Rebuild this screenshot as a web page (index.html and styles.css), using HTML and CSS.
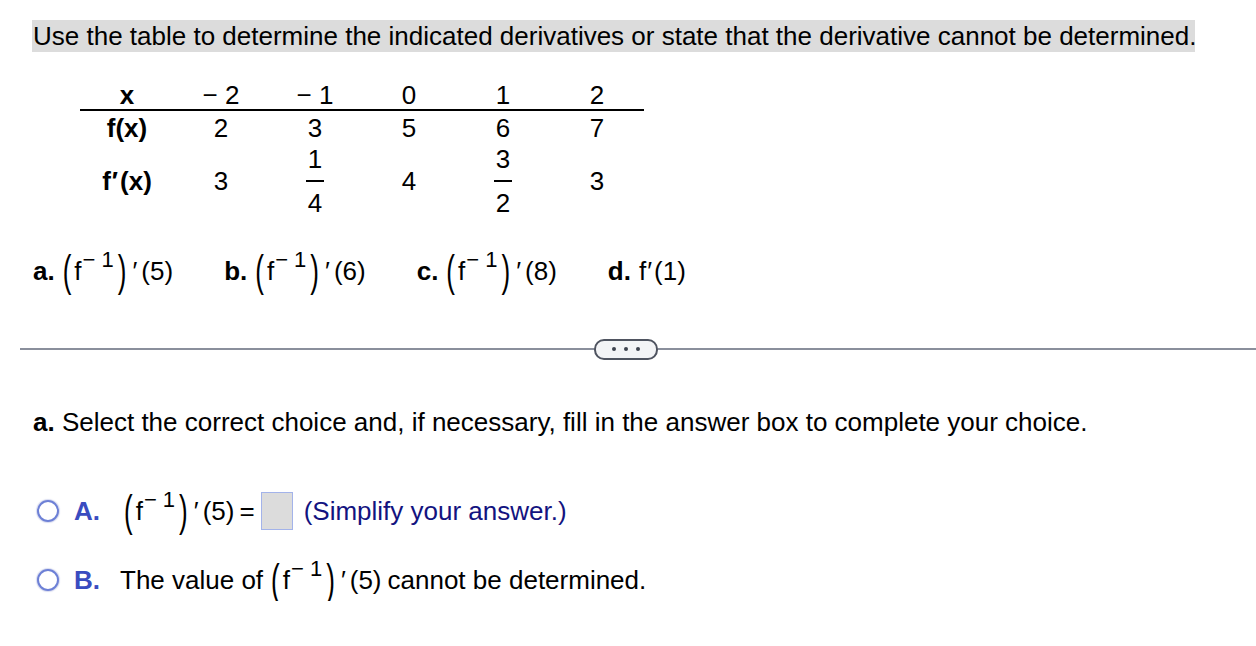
FILE: index.html
```html
<!DOCTYPE html>
<html>
<head>
<meta charset="utf-8">
<link rel="stylesheet" href="styles.css">
</head>
<body>
<div class="header">Use the table to determine the indicated derivatives or state that the derivative cannot be determined.</div>

<div class="table">
  <div class="cell lab head">x</div>
  <div class="cell head">− 2</div>
  <div class="cell head">− 1</div>
  <div class="cell head">0</div>
  <div class="cell head">1</div>
  <div class="cell head">2</div>
  <div class="rule"></div>
  <div class="cell lab r1">f(x)</div>
  <div class="cell r1">2</div>
  <div class="cell r1">3</div>
  <div class="cell r1">5</div>
  <div class="cell r1">6</div>
  <div class="cell r1">7</div>
  <div class="cell lab r2">f<span class="tp">′</span>(x)</div>
  <div class="cell r2">3</div>
  <div class="cell r2"><span class="frac"><span class="num">1</span><span class="bar"></span><span class="den">4</span></span></div>
  <div class="cell r2">4</div>
  <div class="cell r2"><span class="frac"><span class="num">3</span><span class="bar"></span><span class="den">2</span></span></div>
  <div class="cell r2">3</div>
</div>

<div class="parts">
  <div class="part pa"><b>a.</b> <span class="expr"><span class="paren">(</span><span class="fn">f</span><span class="sup">− 1</span><span class="paren">)</span><span class="pr"><span class="pm">′</span>(5)</span></span></div>
  <div class="part pb"><b>b.</b> <span class="expr"><span class="paren">(</span><span class="fn">f</span><span class="sup">− 1</span><span class="paren">)</span><span class="pr"><span class="pm">′</span>(6)</span></span></div>
  <div class="part pc"><b>c.</b> <span class="expr"><span class="paren">(</span><span class="fn">f</span><span class="sup">− 1</span><span class="paren">)</span><span class="pr"><span class="pm">′</span>(8)</span></span></div>
  <div class="part pd"><b>d.</b> f<span class="pm tight">′</span>(1)</div>
</div>

<div class="divider">
  <div class="line"></div>
  <div class="more"><span class="dot"></span><span class="dot"></span><span class="dot"></span></div>
  <div class="line grow"></div>
</div>

<div class="prompt"><b>a.</b> Select the correct choice and, if necessary, fill in the answer box to complete your choice.</div>

<div class="choices">
  <div class="choice">
    <span class="radio"></span>
    <span class="letter">A.</span>
    <span class="body">
      <span class="expr"><span class="paren">(</span><span class="fn">f</span><span class="sup">− 1</span><span class="paren">)</span><span class="pr"><span class="pm">′</span>(5)</span></span><span class="eq">=</span><span class="box"></span><span class="hint">(Simplify your answer.)</span>
    </span>
  </div>
  <div class="choice second">
    <span class="radio"></span>
    <span class="letter">B.</span>
    <span class="body">The value of <span class="expr"><span class="paren">(</span><span class="fn">f</span><span class="sup">− 1</span><span class="paren">)</span><span class="pr"><span class="pm">′</span>(5)</span></span> cannot be determined.</span>
  </div>
</div>
</body>
</html>
```

FILE: styles.css
```css
html, body {
  margin: 0;
  padding: 0;
  background: #ffffff;
}

body {
  font-family: "Liberation Sans", Arial, Helvetica, sans-serif;
  color: #000;
  width: 1256px;
}

.header {
  margin: 20px 0 0 32px;
  width: 1163px;
  height: 32px;
  box-sizing: border-box;
  padding-left: 1px;
  background: #dcdcdc;
  font-size: 26px;
  line-height: 33px;
  white-space: nowrap;
}

.table {
  margin: 29px 0 0 80px;
  width: 564px;
  display: grid;
  grid-template-columns: repeat(6, 94px);
  grid-template-rows: 28px 2px 34px 72px;
  font-size: 26px;
}

.cell {
  display: flex;
  align-items: center;
  justify-content: center;
  line-height: 1;
}

.lab {
  font-weight: bold;
}

.tp {
  margin: 0 2px 0 1px;
}

.rule {
  grid-column: 1 / 7;
  background: #000;
}

.frac {
  display: inline-flex;
  flex-direction: column;
  align-items: center;
  line-height: 22px;
}

.frac .bar {
  width: 18px;
  height: 2px;
  background: #000;
  margin: 10px 0 10px;
}

.parts {
  margin: 27px 0 0 33px;
  display: flex;
  gap: 51px;
  font-size: 26px;
  height: 54px;
  align-items: center;
}

.part {
  white-space: nowrap;
  display: flex;
  align-items: center;
}

.part b {
  margin-right: 8px;
}

.expr {
  display: inline-flex;
  align-items: center;
  white-space: nowrap;
}

.paren {
  display: inline-block;
  font-size: 26px;
  transform: scaleY(1.7);
  font-weight: normal;
  line-height: 1;
}

.fn {
  margin-left: 3px;
}

.sup {
  font-size: 22px;
  position: relative;
  top: -11px;
  margin-left: 1px;
  margin-right: 4px;
}

.pr {
  margin-left: 6px;
}

.pm {
  display: inline-block;
  margin-right: 4px;
}

.pm.tight {
  margin: 0 2px 0 1px;
}

.divider {
  margin: 40px 0 0 20px;
  display: flex;
  align-items: center;
  height: 22px;
}

.line {
  width: 574px;
  height: 2px;
  background: #8a8f9c;
}

.line.grow {
  flex: 1;
  width: auto;
}

.more {
  width: 64px;
  height: 21px;
  box-sizing: border-box;
  border: 2px solid #4f5460;
  border-radius: 10px;
  background: #f3f4f6;
  display: flex;
  align-items: center;
  justify-content: center;
  gap: 8px;
}

.dot {
  width: 4px;
  height: 4px;
  border-radius: 50%;
  background: #3e434f;
}

.prompt {
  margin: 47px 0 0 33px;
  font-size: 26px;
  line-height: 30px;
  white-space: nowrap;
}

.choices {
  margin: 53px 0 0 37px;
  display: flex;
  flex-direction: column;
  gap: 27px;
  font-size: 26px;
}

.choice {
  display: flex;
  align-items: center;
  height: 42px;
  white-space: nowrap;
}

.radio {
  width: 18px;
  height: 18px;
  border: 2px solid #6d80d6;
  border-radius: 50%;
  box-shadow: 0 0 1px 1px rgba(140, 150, 210, 0.35);
  background: #fff;
  margin-right: 15px;
}

.letter {
  color: #3a4cc0;
  font-weight: bold;
  width: 46px;
}

.body {
  display: flex;
  align-items: center;
}

.body .expr {
  margin-left: 4px;
}

.eq {
  margin-left: 5px;
}

.box {
  display: inline-block;
  width: 32px;
  height: 38px;
  box-sizing: border-box;
  background: #dcdcdc;
  border: 1.5px solid #a3b3ea;
  margin-left: 6px;
  margin-right: 11px;
}

.hint {
  color: #131380;
}

.second .body .expr {
  margin: 0 6px 0 8px;
}
```
